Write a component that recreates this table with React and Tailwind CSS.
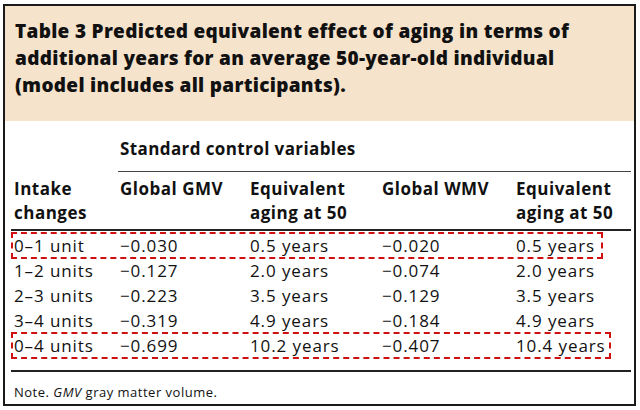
import React from 'react'

const rows = [
  { intake: '0–1 unit', gmv: '−0.030', agingG: '0.5 years', wmv: '−0.020', agingW: '0.5 years', box: 'w-[592px]' },
  { intake: '1–2 units', gmv: '−0.127', agingG: '2.0 years', wmv: '−0.074', agingW: '2.0 years' },
  { intake: '2–3 units', gmv: '−0.223', agingG: '3.5 years', wmv: '−0.129', agingW: '3.5 years' },
  { intake: '3–4 units', gmv: '−0.319', agingG: '4.9 years', wmv: '−0.184', agingW: '4.9 years' },
  { intake: '0–4 units', gmv: '−0.699', agingG: '10.2 years', wmv: '−0.407', agingW: '10.4 years', box: 'w-[600px]' },
]

// columns shared by header and body
const cols = 'grid grid-cols-[106px_130px_132px_134px_1fr] pl-[3px]'

const App = () => {
  return (
    <div className="w-[640px] h-[410px] bg-white pt-[4px] pl-[3px] text-[#111] font-['Open_Sans',sans-serif]">
      <div className="w-[633px] h-[402px] border-2 border-[#1a1a1a] flex flex-col">
        {/* titulo */}
        <div className="bg-[#f6e3cc] h-[115px] pl-[10px] pt-[12px]">
          <h1 className="text-[19px] font-extrabold leading-[27px] tracking-[0.3px]">
            Table 3 Predicted equivalent effect of aging in terms of
            <br />
            additional years for an average 50-year-old individual
            <br />
            (model includes all participants).
          </h1>
        </div>

        <div className="ml-[6px] mr-[3px] text-[17px] leading-[24px]">
          <div className={cols + ' pt-[16px]'}>
            <div />
            <div className="col-span-4 font-bold tracking-[0.4px] pb-[10px] border-b border-[#444] -ml-[2px] pl-[2px]">
              Standard control variables
            </div>
          </div>

          <div className={cols + ' font-bold tracking-[0.5px] pt-[5px] pb-[4px] border-b-2 border-[#222]'}>
            <div>Intake<br />changes</div>
            <div>Global GMV</div>
            <div>Equivalent<br />aging at 50</div>
            <div>Global WMV</div>
            <div>Equivalent<br />aging at 50</div>
          </div>

          <div className="mt-[2px] tracking-[0.9px]">
            {rows.map((r) => (
              <div key={r.intake} className={cols + ' relative h-[25px] items-center'}>
                <div>{r.intake}</div>
                <div>{r.gmv}</div>
                <div>{r.agingG}</div>
                <div>{r.wmv}</div>
                <div>{r.agingW}</div>
                {r.box && (
                  <div className={'absolute left-0 -top-[1px] h-[27px] border-2 border-dashed border-[#cf1010] ' + r.box} />
                )}
              </div>
            ))}
          </div>

          <div className="mt-[12px] border-t-2 border-[#222] pl-[3px] pt-[11px] text-[13px] leading-[18px] tracking-[0.5px]">
            Note. <i>GMV</i> gray matter volume.
          </div>
        </div>
      </div>
    </div>
  )
}

export default App
